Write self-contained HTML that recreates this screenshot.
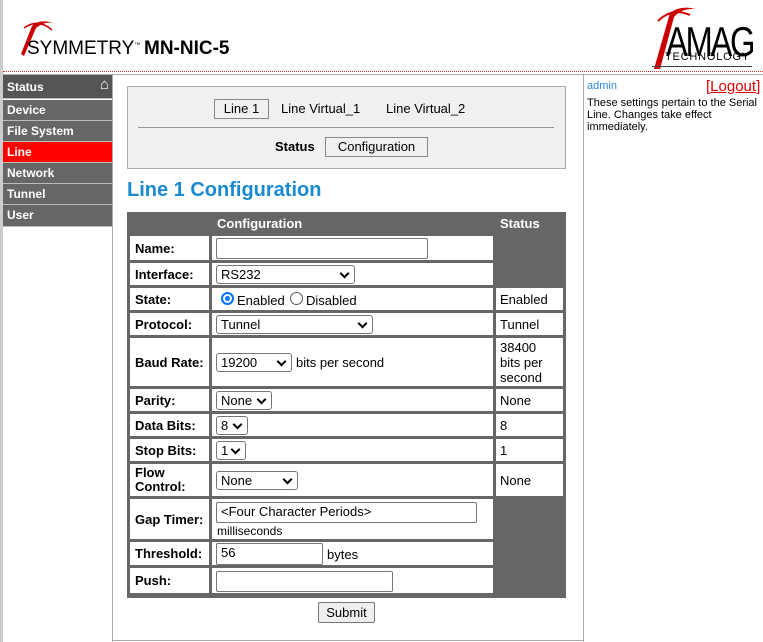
<!DOCTYPE html>
<html><head><style>
*{margin:0;padding:0;box-sizing:border-box}
body{width:763px;height:642px;background:#fff;font-family:"Liberation Sans",Arial,sans-serif;font-size:13px;color:#000;position:relative;overflow:hidden}
.a{position:absolute}
.nav{position:absolute;left:3px;width:109px;height:20px;background:#666;color:#fff;font-weight:bold;font-size:12px;padding:3px 0 0 4px;border-bottom:1px solid #bbb}
.w{position:absolute;background:#fff}
.lb{font-weight:bold;font-size:13px;padding-left:5px;display:flex;align-items:center}
.inp{position:absolute;border:1px solid #767676;border-radius:2px;background:#fff;font-size:13px;padding:1px 4px}
.sel{position:absolute;border:1px solid #767676;border-radius:3px;background:#fff;font-size:13px;padding:1px 4px}
.sel:after{content:"";position:absolute;right:6px;top:4px;width:5px;height:5px;border-right:2px solid #000;border-bottom:2px solid #000;transform:rotate(45deg)}
.st{font-size:13px;padding-left:4px;display:flex;align-items:center}
</style></head><body>
<div class="a" style="left:0;top:0;width:3px;height:642px;background:#ccc"></div>
<svg class="a" style="left:18px;top:16px" width="40" height="42"><path d="M3 38 L14 10 Q22 2 38 8 Q28 4 18 12 L6 40Z" fill="#c00"/><path d="M6 12 Q20 2 34 14" stroke="#c00" stroke-width="1.5" fill="none"/></svg>
<div class="a" style="left:27px;top:38px;font-size:19px">SYMMETRY<sup style="font-size:6px">™</sup></div>
<div class="a" style="left:144px;top:38px;font-size:19px;font-weight:bold">MN-NIC-5</div>
<svg class="a" style="left:650px;top:3px" width="50" height="68"><path d="M4 66 L20 10 Q30 2 46 6 Q32 5 24 14 L10 66Z" fill="#c00"/><path d="M8 18 Q22 4 40 12" stroke="#c00" stroke-width="2" fill="none"/></svg>
<div class="a" style="left:666px;top:21px;font-size:42px;letter-spacing:-3px;transform:scaleX(0.78);transform-origin:left top;line-height:42px">AMAG</div>
<div class="a" style="left:665px;top:51px;font-size:11px;letter-spacing:0.8px">TECHNOLOGY</div>
<div class="a" style="left:652px;top:66px;width:100px;height:1px;background:#444"></div>
<div class="a" style="left:3px;top:71px;width:760px;border-top:1px dotted #d33"></div>
<div class="a" style="left:3px;top:74px;width:760px;height:1px;background:#aaa"></div>
<div class="nav" style="top:75px;height:24px;background:#555;padding-top:5px">Status<span style="position:absolute;right:3px;top:1px;font-size:15px;font-weight:normal">⌂</span></div>
<div class="nav" style="top:100px;height:21px">Device</div>
<div class="nav" style="top:121px;height:21px">File System</div>
<div class="nav" style="top:142px;height:21px;background:#f00">Line</div>
<div class="nav" style="top:163px;height:21px">Network</div>
<div class="nav" style="top:184px;height:21px">Tunnel</div>
<div class="nav" style="top:205px;height:22px">User</div>
<div class="a" style="left:112px;top:75px;width:1px;height:567px;background:#aaa"></div>
<div class="a" style="left:583px;top:75px;width:1px;height:567px;background:#aaa"></div>
<div class="a" style="left:112px;top:640px;width:472px;height:1px;background:#aaa"></div>
<div class="a" style="left:587px;top:80px;font-size:11px;color:#2a8ad8">admin</div>
<div class="a" style="left:706px;top:78px;font-size:15px;color:#d00">[<u>Logout</u>]</div>
<div class="a" style="left:587px;top:97px;font-size:11px;line-height:12px;width:175px">These settings pertain to the Serial Line. Changes take effect immediately.</div>
<div class="a" style="left:127px;top:86px;width:439px;height:83px;background:#f0f0f0;border:1px solid #aaa"></div>
<div class="a" style="left:214px;top:99px;width:55px;height:20px;border:1px solid #888;background:#f0f0f0;font-size:13px;text-align:center;line-height:18px">Line 1</div>
<div class="a" style="left:281px;top:101px;font-size:13px">Line Virtual_1</div>
<div class="a" style="left:386px;top:101px;font-size:13px">Line Virtual_2</div>
<div class="a" style="left:138px;top:127px;width:416px;height:1px;background:#999"></div>
<div class="a" style="left:275px;top:139px;font-size:13px;font-weight:bold">Status</div>
<div class="a" style="left:325px;top:137px;width:103px;height:20px;border:1px solid #888;font-size:13px;text-align:center;line-height:18px">Configuration</div>
<div class="a" style="left:127px;top:179px;font-size:20px;font-weight:bold;color:#1a8ad0">Line 1 Configuration</div>
<div class="a" style="left:127px;top:212px;width:439px;height:386px;background:#666"></div>
<div class="a" style="left:217px;top:216px;color:#fff;font-weight:bold">Configuration</div>
<div class="a" style="left:500px;top:216px;color:#fff;font-weight:bold">Status</div>

<div class="w lb" style="left:130px;top:236px;width:79px;height:24px">Name:</div>
<div class="w" style="left:212px;top:236px;width:281px;height:24px"></div>
<div class="inp" style="left:216px;top:238px;width:212px;height:21px"></div>

<div class="w lb" style="left:130px;top:263px;width:79px;height:22px">Interface:</div>
<div class="w" style="left:212px;top:263px;width:281px;height:22px"></div>
<div class="sel" style="left:216px;top:265px;width:139px;height:19px">RS232</div>

<div class="w lb" style="left:130px;top:288px;width:79px;height:22px">State:</div>
<div class="w" style="left:212px;top:288px;width:281px;height:22px"></div>
<div class="a" style="left:221px;top:292px;width:13px;height:13px;border-radius:50%;border:2px solid #0075ff;background:#fff"><div style="margin:2px;width:5px;height:5px;border-radius:50%;background:#0075ff"></div></div>
<div class="a" style="left:237px;top:293px">Enabled</div>
<div class="a" style="left:290px;top:292px;width:13px;height:13px;border-radius:50%;border:1px solid #555"></div>
<div class="a" style="left:306px;top:293px">Disabled</div>
<div class="w st" style="left:496px;top:288px;width:67px;height:22px">Enabled</div>

<div class="w lb" style="left:130px;top:313px;width:79px;height:22px">Protocol:</div>
<div class="w" style="left:212px;top:313px;width:281px;height:22px"></div>
<div class="sel" style="left:216px;top:315px;width:157px;height:19px">Tunnel</div>
<div class="w st" style="left:496px;top:313px;width:67px;height:22px">Tunnel</div>

<div class="w lb" style="left:130px;top:338px;width:79px;height:48px">Baud Rate:</div>
<div class="w" style="left:212px;top:338px;width:281px;height:48px"></div>
<div class="sel" style="left:216px;top:353px;width:76px;height:19px">19200</div>
<div class="a" style="left:296px;top:355px">bits per second</div>
<div class="w st" style="left:496px;top:338px;width:67px;height:48px;line-height:15px">38400<br>bits per<br>second</div>

<div class="w lb" style="left:130px;top:389px;width:79px;height:22px">Parity:</div>
<div class="w" style="left:212px;top:389px;width:281px;height:22px"></div>
<div class="sel" style="left:216px;top:391px;width:56px;height:19px">None</div>
<div class="w st" style="left:496px;top:389px;width:67px;height:22px">None</div>

<div class="w lb" style="left:130px;top:414px;width:79px;height:22px">Data Bits:</div>
<div class="w" style="left:212px;top:414px;width:281px;height:22px"></div>
<div class="sel" style="left:216px;top:416px;width:32px;height:19px">8</div>
<div class="w st" style="left:496px;top:414px;width:67px;height:22px">8</div>

<div class="w lb" style="left:130px;top:439px;width:79px;height:22px">Stop Bits:</div>
<div class="w" style="left:212px;top:439px;width:281px;height:22px"></div>
<div class="sel" style="left:216px;top:441px;width:30px;height:19px">1</div>
<div class="w st" style="left:496px;top:439px;width:67px;height:22px">1</div>

<div class="w lb" style="left:130px;top:464px;width:79px;height:32px;line-height:14px">Flow<br>Control:</div>
<div class="w" style="left:212px;top:464px;width:281px;height:32px"></div>
<div class="sel" style="left:216px;top:471px;width:82px;height:19px">None</div>
<div class="w st" style="left:496px;top:464px;width:67px;height:32px">None</div>

<div class="w lb" style="left:130px;top:499px;width:79px;height:40px">Gap Timer:</div>
<div class="w" style="left:212px;top:499px;width:281px;height:40px"></div>
<div class="inp" style="left:216px;top:502px;width:261px;height:21px">&lt;Four Character Periods&gt;</div>
<div class="a" style="left:217px;top:524px;font-size:12px">milliseconds</div>

<div class="w lb" style="left:130px;top:542px;width:79px;height:23px">Threshold:</div>
<div class="w" style="left:212px;top:542px;width:281px;height:23px"></div>
<div class="inp" style="left:216px;top:543px;width:107px;height:22px">56</div>
<div class="a" style="left:327px;top:547px">bytes</div>

<div class="w lb" style="left:130px;top:568px;width:79px;height:25px">Push:</div>
<div class="w" style="left:212px;top:568px;width:281px;height:25px"></div>
<div class="inp" style="left:216px;top:571px;width:177px;height:21px"></div>

<div class="a" style="left:318px;top:602px;width:57px;height:21px;border:1px solid #767676;border-radius:2px;background:#efefef;text-align:center;line-height:19px">Submit</div>
</body></html>
